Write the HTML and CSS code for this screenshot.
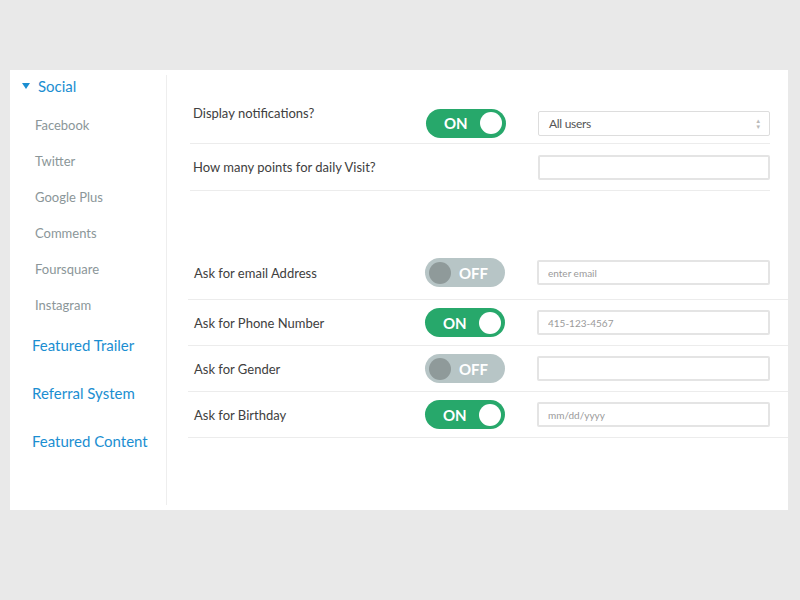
FILE: index.html
```html
<!DOCTYPE html>
<html lang="en">
<head>
  <meta charset="UTF-8">
  <title>Settings</title>
  <link rel="stylesheet" href="styles.css">
</head>
<body>
<div class="card">
  <ul class="side">
    <li class="group open"><span class="caret"></span>Social</li>
    <li class="sub">
      <ul>
        <li>Facebook</li>
        <li>Twitter</li>
        <li>Google Plus</li>
        <li>Comments</li>
        <li>Foursquare</li>
        <li>Instagram</li>
      </ul>
    </li>
    <li class="group">Featured Trailer</li>
    <li class="group">Referral System</li>
    <li class="group">Featured Content</li>
  </ul>

  <div class="main">
    <div class="block top">
      <div class="row first">
        <div class="label">Display notifications?</div>
        <div class="toggle on"><span class="txt">ON</span><span class="knob"></span></div>
        <div class="select">All users<span class="arrows"><i>&#9650;</i><i>&#9660;</i></span></div>
      </div>
      <div class="row">
        <div class="label">How many points for daily Visit?</div>
        <div></div>
        <input class="field" type="text">
      </div>
    </div>

    <div class="block bottom">
      <div class="row first">
        <div class="label">Ask for email Address</div>
        <div class="toggle off"><span class="knob"></span><span class="txt">OFF</span></div>
        <input class="field" type="text" placeholder="enter email">
      </div>
      <div class="row">
        <div class="label">Ask for Phone Number</div>
        <div class="toggle on"><span class="txt">ON</span><span class="knob"></span></div>
        <input class="field" type="text" placeholder="415-123-4567">
      </div>
      <div class="row">
        <div class="label">Ask for Gender</div>
        <div class="toggle off"><span class="knob"></span><span class="txt">OFF</span></div>
        <input class="field" type="text">
      </div>
      <div class="row">
        <div class="label">Ask for Birthday</div>
        <div class="toggle on"><span class="txt">ON</span><span class="knob"></span></div>
        <input class="field" type="text" placeholder="mm/dd/yyyy">
      </div>
    </div>
  </div>
</div>
</body>
</html>
```
FILE: styles.css
```css
body,div,ul,li{margin:0;padding:0;}
ul{list-style-type:none;}
body{background:#e9e9e9;font-family:Lato,"Open Sans",sans-serif;}
.card{display:flex;width:778px;height:430px;margin:70px 0 0 10px;padding:5px 0;background:#fff;}

/* sidebar */
.side{width:156px;border-right:1px solid #eeeeee;flex-shrink:0;}
.side .group{height:48px;line-height:48px;padding-left:22px;font-size:15px;color:#1b8ed1;}
.side .group.open{height:22px;line-height:22px;padding-left:12px;display:flex;align-items:center;}
.side .caret{width:0;height:0;border-left:4px solid transparent;border-right:4px solid transparent;border-top:6px solid #1b8ed1;margin-right:8px;}
.side .sub{margin:10px 0 -2px 0;}
.side .sub li{height:36px;line-height:36px;padding-left:25px;font-size:13px;color:#8b9699;}

/* main */
.main{flex:1;padding-top:22px;}
.block{display:flex;flex-direction:column;}
.block.top{margin-left:23px;width:580px;}
.block.bottom{margin:63px 0 0 21px;width:600px;}
.row{display:grid;grid-template-columns:233px 112px 232px;align-items:center;height:47px;padding-left:3px;border-bottom:1px solid #ececec;box-sizing:border-box;}
.block.top .row.first{padding-top:6px;}
.block.top .row.first .label{align-self:start;margin-top:2px;}
.block.bottom .row{height:46px;padding:0 18px 0 6px;grid-template-columns:231px 112px 233px;}
.block.bottom .row.first{padding-bottom:8px;}
.label{font-size:13px;line-height:16px;color:#404040;}

/* toggles */
.toggle{display:flex;align-items:center;justify-content:space-between;width:80px;height:29px;border-radius:15px;padding:0 4px;box-sizing:border-box;}
.toggle .knob{width:22px;height:22px;border-radius:50%;}
.toggle .txt{font-weight:700;font-size:15px;color:#fff;}
.toggle.on{background:#27a86b;}
.toggle.on .txt{margin-left:14px;}
.toggle.on .knob{background:#fff;}
.toggle.off{background:#b7c5c6;}
.toggle.off .knob{background:#8f9a9a;}
.toggle.off .txt{margin-right:13px;}

/* fields */
.field{width:100%;height:25px;border:2px solid #e4e4e4;border-radius:2px;padding:0 9px;box-sizing:border-box;font-family:Lato,sans-serif;font-size:10px;color:#555;outline:none;}
.field::placeholder{color:#9a9a9a;}
.select{position:relative;height:25px;line-height:24px;border:1px solid #dddddd;border-radius:2px;padding:0 10px;box-sizing:border-box;font-size:12px;color:#555;letter-spacing:-0.3px;}
.select .arrows{position:absolute;right:8px;top:6px;display:flex;flex-direction:column;}
.select .arrows i{font-style:normal;font-size:6px;line-height:6px;color:#b9b9b9;}
```
